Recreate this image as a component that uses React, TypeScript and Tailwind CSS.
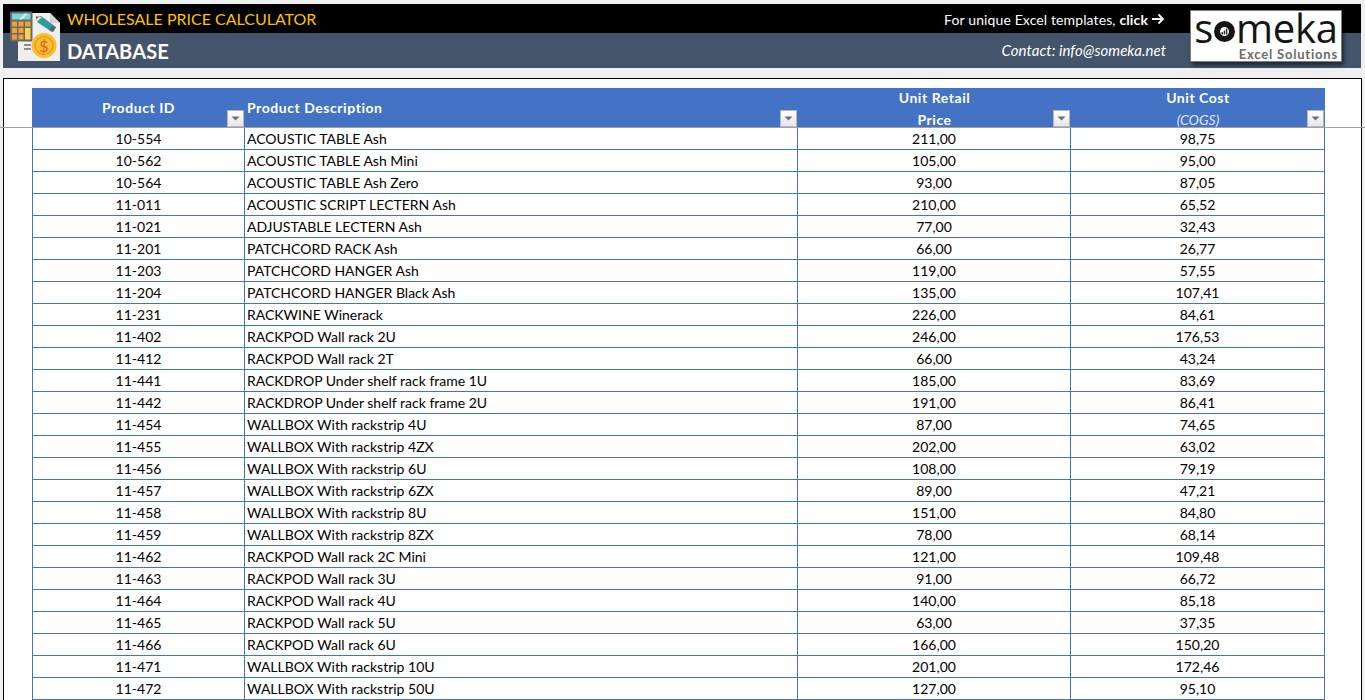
const rows: [string, string, string, string][] = [
  ["10-554", "ACOUSTIC TABLE Ash", "211,00", "98,75"],
  ["10-562", "ACOUSTIC TABLE Ash Mini", "105,00", "95,00"],
  ["10-564", "ACOUSTIC TABLE Ash Zero", "93,00", "87,05"],
  ["11-011", "ACOUSTIC SCRIPT LECTERN Ash", "210,00", "65,52"],
  ["11-021", "ADJUSTABLE LECTERN Ash", "77,00", "32,43"],
  ["11-201", "PATCHCORD RACK Ash", "66,00", "26,77"],
  ["11-203", "PATCHCORD HANGER Ash", "119,00", "57,55"],
  ["11-204", "PATCHCORD HANGER Black Ash", "135,00", "107,41"],
  ["11-231", "RACKWINE Winerack", "226,00", "84,61"],
  ["11-402", "RACKPOD Wall rack 2U", "246,00", "176,53"],
  ["11-412", "RACKPOD Wall rack 2T", "66,00", "43,24"],
  ["11-441", "RACKDROP Under shelf rack frame 1U", "185,00", "83,69"],
  ["11-442", "RACKDROP Under shelf rack frame 2U", "191,00", "86,41"],
  ["11-454", "WALLBOX With rackstrip 4U", "87,00", "74,65"],
  ["11-455", "WALLBOX With rackstrip 4ZX", "202,00", "63,02"],
  ["11-456", "WALLBOX With rackstrip 6U", "108,00", "79,19"],
  ["11-457", "WALLBOX With rackstrip 6ZX", "89,00", "47,21"],
  ["11-458", "WALLBOX With rackstrip 8U", "151,00", "84,80"],
  ["11-459", "WALLBOX With rackstrip 8ZX", "78,00", "68,14"],
  ["11-462", "RACKPOD Wall rack 2C Mini", "121,00", "109,48"],
  ["11-463", "RACKPOD Wall rack 3U", "91,00", "66,72"],
  ["11-464", "RACKPOD Wall rack 4U", "140,00", "85,18"],
  ["11-465", "RACKPOD Wall rack 5U", "63,00", "37,35"],
  ["11-466", "RACKPOD Wall rack 6U", "166,00", "150,20"],
  ["11-471", "WALLBOX With rackstrip 10U", "201,00", "172,46"],
  ["11-472", "WALLBOX With rackstrip 50U", "127,00", "95,10"],
];

function FilterButton() {
  return (
    <div className="absolute right-[1px] bottom-[1px] flex h-[17px] w-[17px] items-center justify-center border border-[#b4b8bf] bg-gradient-to-b from-[#ffffff] to-[#e4e6ea]">
      <svg width="9" height="5" viewBox="0 0 9 5">
        <path d="M0.5 0.5H8.5L4.5 4.5Z" fill="#6f6f6f" />
      </svg>
    </div>
  );
}

function AppIcon() {
  return (
    <svg className="absolute left-[9px] top-[11px]" width="52" height="52" viewBox="0 0 52 52">
      <path d="M9 2H41L51 12V50H9Z" fill="#eeeeee" />
      <path d="M41 2L51 12H41Z" fill="#d4d4d4" />
      <rect x="1" y="0.500" width="22.500" height="30" rx="1.500" fill="#616a6f" />
      <rect x="3" y="2.500" width="18.500" height="6" fill="#7fd6d2" />
      <path d="M10 8.500L16 2.500H19L13 8.500Z" fill="#c9f0ee" />
      <g fill="#f5a02c">
        <rect x="3" y="10.500" width="5" height="5" />
        <rect x="9.500" y="10.500" width="5" height="5" />
        <rect x="3" y="17" width="5" height="5" />
        <rect x="9.500" y="17" width="5" height="5" />
        <rect x="3" y="23.500" width="5" height="5" />
        <rect x="9.500" y="23.500" width="5" height="5" />
        <rect x="16" y="10.500" width="5.500" height="5" />
      </g>
      <rect x="16" y="17" width="5.500" height="11.500" fill="#fbd44c" />
      <path d="M27 6L32 5L47 16L43 21L28 11Z" fill="#2f9c9f" />
      <path d="M27 5.500L33 6L28 11Z" fill="#f4d9b0" />
      <path d="M27 5.500L29.500 5.700L27.300 8Z" fill="#444444" />
      <path d="M43 14.500L47 16.500L44 21L40 19Z" fill="#5b6468" />
      <rect x="15" y="33" width="7" height="2" fill="#8a8f92" />
      <rect x="15" y="37" width="7" height="2" fill="#8a8f92" />
      <circle cx="35" cy="34.500" r="12.500" fill="#fbc02d" />
      <circle cx="35" cy="34.500" r="9" fill="none" stroke="#f08a24" strokeWidth="1.200" />
      <text x="35" y="40.500" textAnchor="middle" fontSize="16" fill="#e2582a" fontFamily="Lato, sans-serif">$</text>
    </svg>
  );
}

function Logo() {
  return (
    <div className="absolute left-[1190px] top-[10px] flex h-[52px] w-[152px] flex-col items-center border border-[#7d7d7d] bg-white shadow-[2px_3px_4px_rgba(0,0,0,0.55)]">
      <div className="flex h-[33px] items-center font-['Open_Sans',sans-serif] text-[40px] leading-[33px] tracking-[-0.3px] text-[#151515]">
        <span>s</span>
        <svg width="21" height="21" viewBox="0 0 21 21" className="mx-[1px] mt-[7px]">
          <circle cx="10.500" cy="10.500" r="7.500" fill="none" stroke="#151515" strokeWidth="6" />
          <g fill="#333333">
            <rect x="7.500" y="11" width="1.500" height="2.500" />
            <rect x="9.700" y="9.500" width="1.500" height="4" />
            <rect x="11.900" y="7.500" width="1.500" height="6" />
          </g>
        </svg>
        <span>meka</span>
      </div>
      <div className="mt-[3px] w-full pr-[3px] text-right font-['Lato',sans-serif] text-[13px] font-bold leading-[14px] tracking-[0.8px] text-[#6b6b6b]">
        Excel Solutions
      </div>
    </div>
  );
}

export default function App() {
  return (
    <div className="relative h-[700px] w-[1365px] overflow-hidden bg-[#f0f0f0] font-['Lato',sans-serif]">
      <div className="ml-[3px] mt-[4px] flex h-[29px] w-[1358px] items-center justify-between bg-black pl-[64px]">
        <div className="pt-[1px] text-[16px] leading-[28px] text-[#ffc000]">WHOLESALE PRICE CALCULATOR</div>
        <div className="mr-[196px] flex items-center pt-[1px] text-[14px] tracking-[0.12px] text-white">
          <span>For unique Excel templates,&nbsp;</span>
          <b>click</b>
          <svg className="ml-[3px]" width="14" height="12" viewBox="0 0 14 12">
            <path d="M1 6H12M7.500 1.500L12 6L7.500 10.500" fill="none" stroke="#ffffff" strokeWidth="1.800" />
          </svg>
        </div>
      </div>
      <div className="ml-[3px] flex h-[35px] w-[1358px] items-center justify-between bg-[#44546a] pl-[64px]">
        <div className="pt-[1px] text-[20px] font-bold leading-[34px] tracking-[0.1px] text-white">DATABASE</div>
        <div className="mr-[195px] text-[15px] italic tracking-[0.05px] text-white">Contact: info@someka.net</div>
      </div>
      <AppIcon />
      <Logo />
      <div className="ml-[3px] mt-[10px] h-[622px] w-[1359px] border-x border-t border-black bg-white pl-[28px] pt-[9px]">
        <div className="grid h-[40px] w-[1293px] grid-cols-[213px_553px_273px_254px] grid-rows-[40px] bg-[#4472c4] text-[14px] font-bold tracking-[0.55px] text-white">
          <div className="relative flex items-center justify-center pb-[1px]">
            Product ID
            <FilterButton />
          </div>
          <div className="relative flex items-center pb-[1px] pl-[2px]">
            Product Description
            <FilterButton />
          </div>
          <div className="relative flex flex-col items-center leading-[22px]">
            <div className="-mt-[1px]">Unit Retail</div>
            <div>Price</div>
            <FilterButton />
          </div>
          <div className="relative flex flex-col items-center leading-[22px]">
            <div className="-mt-[1px]">Unit Cost</div>
            <div className="font-normal italic tracking-normal text-[#dfe7f5]">(COGS)</div>
            <FilterButton />
          </div>
        </div>
        {rows.map((r) => (
          <div
            key={r[0]}
            className="grid h-[22px] w-[1293px] grid-cols-[213px_553px_273px_254px] border-b border-[#4472c4] text-[14px] leading-[21px] text-black"
          >
            <div className="border-x border-[#4472c4] text-center">{r[0]}</div>
            <div className="border-r border-[#4472c4] pl-[2px]">{r[1]}</div>
            <div className="border-r border-[#4472c4] text-center">{r[2]}</div>
            <div className="border-r border-[#4472c4] text-center">{r[3]}</div>
          </div>
        ))}
      </div>
      <div className="absolute left-0 top-[127px] h-[1px] w-[1365px] bg-[#a0a0a0]" />
    </div>
  );
}
